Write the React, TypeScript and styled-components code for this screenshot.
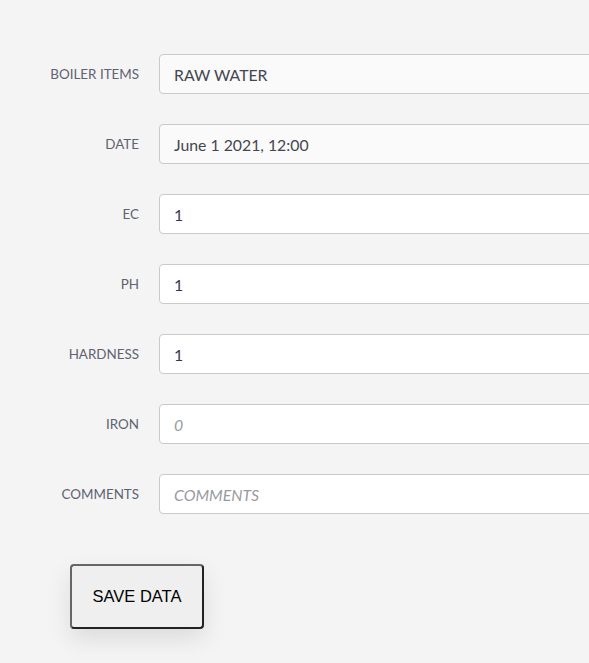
import styled, { createGlobalStyle } from 'styled-components'

const GlobalStyle = createGlobalStyle`
  html, body {
    margin: 0;
    padding: 0;
    background: #f4f4f4;
    overflow: hidden;
  }
  body {
    font-family: "Source Sans Pro", Lato, "Noto Sans", sans-serif;
  }
`

const Page = styled.div`
  width: 589px;
  min-height: 663px;
  padding: 54px 0 0 40px;
  box-sizing: border-box;
  overflow: hidden;
`

const Form = styled.form`
  display: flex;
  flex-direction: column;
  gap: 30px;
`

const Row = styled.div`
  display: flex;
  align-items: center;
  gap: 20px;
`

const Label = styled.label`
  width: 99px;
  flex-shrink: 0;
  text-align: right;
  font-size: 13.4px;
  color: #5f6270;
  text-transform: uppercase;
`

const Input = styled.input<{ $muted?: boolean }>`
  width: 520px;
  height: 40px;
  box-sizing: border-box;
  flex-shrink: 0;
  border: 1px solid #cacaca;
  border-radius: 4px;
  padding: 0 14px;
  font-family: inherit;
  font-size: 15.8px;
  color: ${({ $muted }) => ($muted ? '#444650' : '#35355a')};
  background: ${({ $muted }) => ($muted ? '#fafafa' : '#fff')};
  outline: none;
  &::placeholder {
    color: #9a9aa0;
    font-style: italic;
  }
`

const Actions = styled.div`
  padding: 50px 0 0 30px;
`

const SaveButton = styled.button`
  width: 134px;
  height: 65px;
  border: 2px solid #222;
  border-left-color: #666;
  border-top-color: #666;
  border-radius: 4px;
  background: #efefef;
  font-family: Arial, "Liberation Sans", sans-serif;
  font-size: 16.5px;
  color: #000;
  box-shadow: 0 10px 24px rgba(0, 0, 0, 0.1);
  cursor: pointer;
`

const fields = [
  { label: 'Boiler items', value: 'RAW WATER', muted: true },
  { label: 'Date', value: 'June 1 2021, 12:00', muted: true },
  { label: 'EC', value: '1' },
  { label: 'PH', value: '1' },
  { label: 'Hardness', value: '1' },
  { label: 'Iron', placeholder: '0' },
  { label: 'Comments', placeholder: 'COMMENTS' },
]

export default function App() {
  return (
    <>
      <GlobalStyle />
      <Page>
        <Form onSubmit={e => e.preventDefault()}>
          {fields.map(f => (
            <Row key={f.label}>
              <Label>{f.label}</Label>
              <Input
                $muted={f.muted}
                defaultValue={f.value}
                placeholder={f.placeholder}
                readOnly={f.label === 'Boiler items'}
              />
            </Row>
          ))}
        </Form>
        <Actions>
          <SaveButton type="button">SAVE DATA</SaveButton>
        </Actions>
      </Page>
    </>
  )
}
